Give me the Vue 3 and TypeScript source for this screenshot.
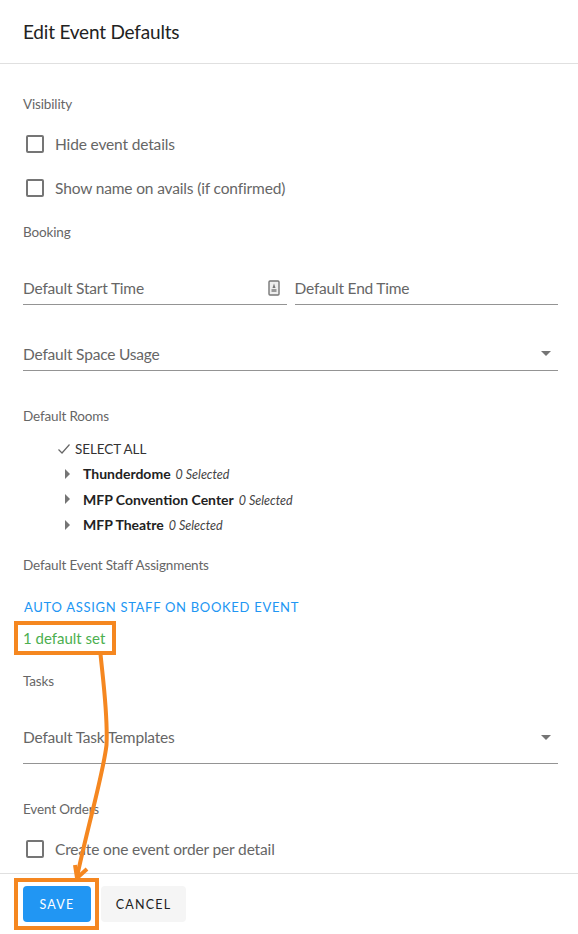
<script setup lang="ts">
const rooms = [
  { name: 'Thunderdome', selected: 0 },
  { name: 'MFP Convention Center', selected: 0 },
  { name: 'MFP Theatre', selected: 0 },
]
</script>

<template>
  <div class="dialog">
    <header class="dialog__header">Edit Event Defaults</header>

    <main class="dialog__body">
      <div class="section-label section-label--first">Visibility</div>
      <label class="check"><span class="check__box"></span>Hide event details</label>
      <label class="check"><span class="check__box"></span>Show name on avails (if confirmed)</label>

      <div class="section-label section-label--booking">Booking</div>
      <div class="time-row">
        <div class="field field--time">
          <span>Default Start Time</span>
          <svg class="field__icon" width="12" height="16" viewBox="0 0 12 16">
            <rect x="1" y="1" width="10" height="14" rx="1" fill="#eee" stroke="#777" stroke-width="1.4" />
            <path d="M6 3.5 7.5 8h-3z" fill="#777" />
            <rect x="3.5" y="9" width="5" height="3" fill="#999" />
          </svg>
        </div>
        <div class="field field--time"><span>Default End Time</span></div>
      </div>

      <div class="field field--select field--usage">
        <span>Default Space Usage</span>
        <i class="caret"></i>
      </div>

      <div class="section-label section-label--rooms">Default Rooms</div>
      <div class="tree">
        <div class="tree__all">
          <svg width="14" height="12" viewBox="0 0 14 12">
            <path d="M1.5 6.5 5 10l7.5-8.5" fill="none" stroke="#666" stroke-width="1.2" />
          </svg>
          SELECT ALL
        </div>
        <div v-for="room in rooms" :key="room.name" class="tree__row">
          <i class="tree__arrow"></i>
          <b>{{ room.name }}</b>
          <em>{{ room.selected }} Selected</em>
        </div>
      </div>

      <div class="section-label section-label--staff">Default Event Staff Assignments</div>
      <a class="link">AUTO ASSIGN STAFF ON BOOKED EVENT</a>
      <div class="default-set">1 default set</div>

      <div class="section-label section-label--tasks">Tasks</div>
      <div class="field field--select field--tasks">
        <span>Default Task Templates</span>
        <i class="caret"></i>
      </div>

      <div class="section-label section-label--orders">Event Orders</div>
      <label class="check check--orders"><span class="check__box"></span>Create one event order per detail</label>
    </main>

    <footer class="dialog__footer">
      <button class="btn btn--save">SAVE</button>
      <button class="btn btn--cancel">CANCEL</button>
    </footer>

    <!-- annotation drawn on top of the screenshot -->
    <div class="mark mark--set"></div>
    <div class="mark mark--save"></div>
    <svg class="arrow" width="578" height="934" viewBox="0 0 578 934">
      <path d="M100.500 654C103 680 108 715 106.500 745 103 775 88 825 77 877" fill="none" stroke="#f58720" stroke-width="4" />
      <path d="M75 865 77 878 87 869" fill="none" stroke="#f58720" stroke-width="4" />
    </svg>
  </div>
</template>

<style>
html,
body {
  margin: 0;
  background: #fff;
}
</style>

<style scoped>
.dialog {
  position: relative;
  display: flex;
  flex-direction: column;
  width: 578px;
  height: 934px;
  overflow: hidden;
  background: #fff;
  font-family: Lato, "Noto Sans", sans-serif;
  color: #666;
}

.dialog__header {
  flex: none;
  height: 63px;
  padding: 0 23px;
  line-height: 64px;
  font-size: 19px;
  letter-spacing: -0.2px;
  color: #222;
  border-bottom: 1px solid #e0e0e0;
}

.dialog__body {
  flex: 1;
  min-height: 0;
  padding: 0 20px 0 23px;
  overflow: hidden;
}

.section-label {
  height: 18px;
  line-height: 18px;
  font-size: 13.500px;
  letter-spacing: -0.15px;
  color: #666;
}

.section-label--first {
  margin-top: 31px;
}

.section-label--booking {
  margin-top: 23px;
}

.section-label--rooms {
  margin-top: 36px;
}

.section-label--staff {
  margin-top: 18px;
}

.section-label--tasks {
  margin-top: 24px;
}

.section-label--orders {
  margin-top: 36px;
}

.check {
  display: flex;
  align-items: center;
  height: 24px;
  margin-top: 20px;
  padding-left: 3px;
  font-size: 15.500px;
  letter-spacing: -0.15px;
  color: #666;
}

.check:first-of-type {
  margin-top: 19px;
}

.check--orders {
  margin-top: 19px;
}

.check__box {
  flex: none;
  width: 14px;
  height: 14px;
  margin-right: 11px;
  border: 2px solid #757575;
  border-radius: 2px;
}

.time-row {
  display: flex;
  gap: 8px;
  margin-top: 31px;
}

.field {
  display: flex;
  align-items: center;
  justify-content: space-between;
  box-sizing: border-box;
  padding-bottom: 1px;
  border-bottom: 1px solid #949494;
  font-size: 15.500px;
  letter-spacing: -0.2px;
  color: #666;
}

.field--time {
  flex: 1;
  height: 33px;
}

.field__icon {
  margin-right: 7px;
}

.field--select {
  height: 33px;
  padding-right: 7px;
}

.field--usage {
  margin-top: 33px;
}

.field--tasks {
  margin-top: 23px;
  height: 51px;
}

.caret {
  width: 0;
  height: 0;
  border-left: 5px solid transparent;
  border-right: 5px solid transparent;
  border-top: 5px solid #757575;
}

.tree {
  margin-top: 11px;
  padding-left: 34px;
}

.tree__all {
  display: flex;
  align-items: center;
  gap: 4px;
  height: 25px;
  font-size: 13.500px;
  letter-spacing: -0.1px;
  color: #333;
}

.tree__row {
  display: flex;
  align-items: center;
  height: 25.500px;
  padding-left: 8px;
  font-size: 14px;
  color: #222;
}

.tree__row b {
  margin-left: 13px;
  font-weight: 700;
}

.tree__row em {
  margin-top: 2px;
  margin-left: 5px;
  font-size: 12.500px;
  color: #444;
}

.tree__arrow {
  width: 0;
  height: 0;
  border-top: 5px solid transparent;
  border-bottom: 5px solid transparent;
  border-left: 5px solid #757575;
}

.link {
  display: block;
  margin-top: 24px;
  padding-left: 1px;
  height: 18px;
  line-height: 18px;
  font-size: 13px;
  letter-spacing: 0.7px;
  color: #2196f3;
}

.default-set {
  margin-top: 12px;
  height: 20px;
  line-height: 20px;
  font-size: 15px;
  color: #4caf50;
}

.dialog__footer {
  flex: none;
  display: flex;
  gap: 10px;
  box-sizing: border-box;
  height: 61px;
  padding: 12px 23px;
  border-top: 1px solid #e0e0e0;
}

.btn {
  height: 36px;
  border: none;
  border-radius: 4px;
  font-family: inherit;
  font-size: 12.500px;
  letter-spacing: 1.2px;
}

.btn--save {
  width: 68px;
  background: #2196f3;
  color: #fff;
}

.btn--cancel {
  width: 85px;
  background: #f5f5f5;
  color: #222;
}

.mark {
  position: absolute;
  box-sizing: border-box;
  border: 4px solid #f58720;
}

.mark--set {
  left: 14px;
  top: 621px;
  width: 102px;
  height: 34px;
}

.mark--save {
  left: 14px;
  top: 878px;
  width: 85px;
  height: 52px;
}

.arrow {
  position: absolute;
  left: 0;
  top: 0;
  pointer-events: none;
}
</style>
